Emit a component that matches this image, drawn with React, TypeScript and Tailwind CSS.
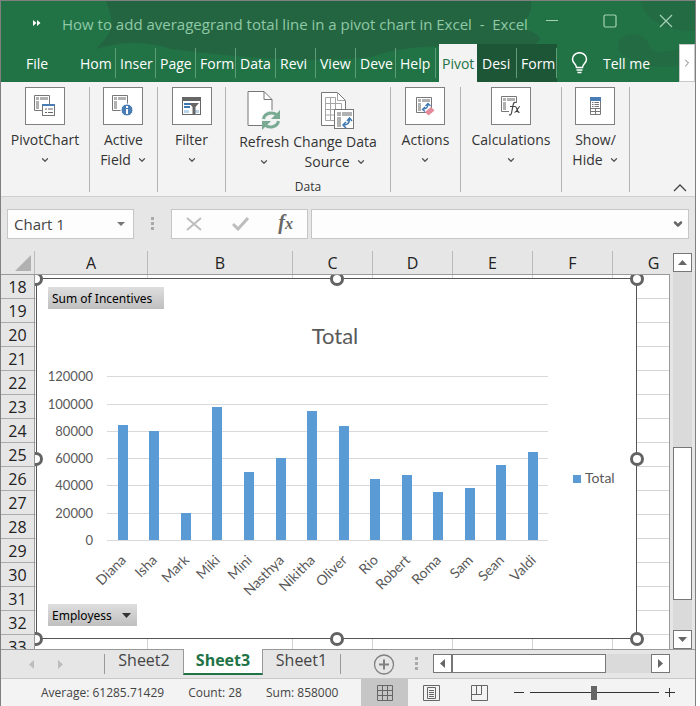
import React from 'react';
import { ChevronDown, ChevronRight, ChevronUp } from 'lucide-react';

const tabs = ['Hom', 'Inser', 'Page', 'Form', 'Data', 'Revi', 'View', 'Deve', 'Help'];

const columns = [
  { name: 'A', width: 'w-[113px]' },
  { name: 'B', width: 'w-[145px]' },
  { name: 'C', width: 'w-20' },
  { name: 'D', width: 'w-20' },
  { name: 'E', width: 'w-20' },
  { name: 'F', width: 'w-20' },
];

const rows = [18, 19, 20, 21, 22, 23, 24, 25, 26, 27, 28, 29, 30, 31, 32, 33];

const incentives = [
  { name: 'Diana', total: 85000 },
  { name: 'Isha', total: 80000 },
  { name: 'Mark', total: 20000 },
  { name: 'Miki', total: 98000 },
  { name: 'Mini', total: 50000 },
  { name: 'Nasthya', total: 60000 },
  { name: 'Nikitha', total: 95000 },
  { name: 'Oliver', total: 84000 },
  { name: 'Rio', total: 45000 },
  { name: 'Robert', total: 48000 },
  { name: 'Roma', total: 35000 },
  { name: 'Sam', total: 38000 },
  { name: 'Sean', total: 55000 },
  { name: 'Valdi', total: 65000 },
];

const axis = [0, 20000, 40000, 60000, 80000, 100000, 120000];

function TitleBar() {
  return (
    <div className="flex h-[43px] items-center">
      <button aria-label="Customize Quick Access Toolbar" className="ml-8 w-[29px]">
        <svg width="8" height="6" viewBox="0 0 8 6" fill="#fff">
          <path d="M0 0l3.5 3L0 6zM4 0l3.5 3L4 6z" />
        </svg>
      </button>
      <h1 className="flex-1 truncate whitespace-pre pt-1 text-[15px] text-[#8fc9a6]">
        How to add averagegrand total line in a pivot chart in Excel  -  Excel
      </h1>
      <div className="flex items-center pb-1 pr-[22px] text-[#a5d3b5]">
        <button aria-label="Minimize" className="w-11">
          <svg width="14" height="14" viewBox="0 0 14 14" stroke="currentColor">
            <path d="M1 6.5h12" />
          </svg>
        </button>
        <button aria-label="Maximize" className="ml-3.5 w-11">
          <svg width="14" height="14" viewBox="0 0 14 14" fill="none" stroke="currentColor" strokeWidth="1.2">
            <rect x="1" y="1" width="12" height="12" rx="1.5" />
          </svg>
        </button>
        <button aria-label="Close" className="ml-3">
          <svg width="14" height="14" viewBox="0 0 14 14" stroke="currentColor" strokeWidth="1.2">
            <path d="M1 1l12 12M13 1L1 13" />
          </svg>
        </button>
      </div>
    </div>
  );
}

function RibbonTabs() {
  return (
    <nav className="flex h-[38px] items-center whitespace-nowrap text-[14px] text-white">
      <button className="w-[75px] pl-[25px] text-left">File</button>
      {tabs.map((tab) => (
        <button key={tab} className="h-[30px] w-10 border-r border-[#5f9d79] pl-1 text-left">
          {tab}
        </button>
      ))}
      <button className="ml-[3px] h-full w-[38px] bg-[#f3f3f3] pl-[3px] text-left text-[#217346]">Pivot</button>
      <div className="flex h-full w-20 items-center bg-[#1d5637]">
        <button className="h-[30px] w-10 border-r border-[#5f9d79] pl-[5px] text-left">Desi</button>
        <button className="h-[30px] w-10 border-r border-[#5f9d79] pl-1 text-left">Form</button>
      </div>
      <button className="ml-[14px] flex flex-1 items-center gap-[15px]">
        <svg width="17" height="22" viewBox="0 0 17 22" fill="none" stroke="#fff" strokeWidth="1.5">
          <path d="M5.5 15.5c0-3.5-4-4-4-8.300a7 6.500 0 0 1 14 0c0 4.300-4 4.800-4 8.300z" />
          <path d="M5.500 18h6M6.500 20.500h4" />
        </svg>
        Tell me
      </button>
      <button aria-label="Scroll tabs" className="flex h-full w-4 items-center justify-center border border-[#c8c8c8] bg-white text-[#777]">
        <ChevronRight size={12} className="shrink-0" />
      </button>
    </nav>
  );
}

function Sheet() {
  return (
    <>
      <path d="M.5.5h15v15H.5z" fill="#fff" stroke="#777" />
      <path d="M2 2h3v3H2zM6 2h8v3H6zM2 6h3v8H2z" fill="#b1b1b1" />
    </>
  );
}

function Caret() {
  return <ChevronDown size={10} strokeWidth={3} className="inline-block text-[#555]" />;
}

function Group({ lines, width, children }) {
  return (
    <div className={`flex shrink-0 flex-col items-center border-r border-[#b4b4b4] ${width}`}>
      <button className="flex flex-col items-center text-[14px] leading-5 text-[#333]">
        <span className="mb-[5px] flex h-[38px] w-10 items-center justify-center border border-[#808080] bg-white">
          {children}
        </span>
        <span>{lines[0]}</span>
        <span className="flex h-5 items-center gap-1.5">
          {lines[1]}
          <Caret />
        </span>
      </button>
    </div>
  );
}

function Ribbon() {
  return (
    <div className="flex h-[115px] border-b border-[#cfcfcf] bg-[#f3f3f3] pb-1 pt-[5px]">
      <Group lines={['PivotChart']} width="w-[89px]">
        <svg width="22" height="22" viewBox="0 0 22 22">
          <Sheet />
          <rect x="8.500" y="9.500" width="12" height="11" fill="#fff" stroke="#777" />
          <path d="M8 9h13v2H8z" fill="#4a7db3" />
          <path d="M11 14h2M14 14h5M11 17.500h2M14 17.500h5" stroke="#666" />
        </svg>
      </Group>
      <Group lines={['Active', 'Field']} width="w-[68px]">
        <svg width="22" height="22" viewBox="0 0 22 22">
          <Sheet />
          <circle cx="15" cy="15" r="6" fill="#4a7db3" stroke="#fff" />
          <path d="M15 11v2M15 14v5" stroke="#fff" strokeWidth="2" />
        </svg>
      </Group>
      <Group lines={['Filter']} width="w-[68px]">
        <svg width="19" height="18" viewBox="0 0 19 18">
          <rect x=".5" y=".5" width="18" height="17" fill="#fff" stroke="#666" />
          <path d="M0 0h19v4H0z" fill="#666" />
          <path d="M2 6h9v2H2zM2 9h6v2H2z" fill="#3e76b0" />
          <path d="M2 13h5v3H2zM13 13h4v3h-4z" fill="#b9d3ea" />
          <path d="M7 6h10l-3.500 4v7h-3v-7z" fill="#666" />
        </svg>
      </Group>
      <div className="flex w-[165px] shrink-0 flex-col border-r border-[#b4b4b4] text-[#333]">
        <div className="flex flex-1 justify-center gap-1 pt-1 text-[14px] leading-5">
          <button className="flex flex-col items-center">
            <svg width="40" height="40" viewBox="-3 0 40 40" className="mb-px" fill="none">
              <path d="M1 .5h16l8 8v26H1z" fill="#fff" stroke="#777" />
              <path d="M17 .5v8h8" stroke="#777" />
              <circle cx="24" cy="29" r="10" fill="#f3f3f3" />
              <path d="M16.500 28a8 7 0 0 1 14-3.500M31.500 30a8 7 0 0 1-14 3.500" stroke="#79ab93" strokeWidth="3" />
              <path d="M33 19v9h-9zM15 39v-9h9z" fill="#79ab93" />
            </svg>
            Refresh
            <span className="flex h-5 items-center">
              <Caret />
            </span>
          </button>
          <button className="flex flex-col items-center">
            <svg width="40" height="40" viewBox="-5 0 40 40" className="mb-px" fill="none">
              <path d="M1.500 1.500h16l8 8v25h-24z" fill="#fff" stroke="#777" />
              <path d="M17.500 1.500v8h8M5.500 6.500h10v23h-10zM10.500 6.500v23M5.500 12.500h16v17h-16M5.500 18.500h16M5.500 24h16M15.500 12.500v17" stroke="#a5a5a5" />
              <rect x="14.500" y="18.500" width="19" height="19" fill="#fff" stroke="#777" />
              <path d="M17 21h4v4h-4zM22 21h10v4H22zM17 26h4v10h-4z" fill="#b1b1b1" />
              <path d="M23.500 34c4 0 6-2 6-6M27 30l2.500-3 2.500 3M26 31l-3 3 3 3" stroke="#3e76b0" strokeWidth="1.500" />
            </svg>
            Change Data
            <span className="flex h-5 items-center gap-1.5">
              Source
              <Caret />
            </span>
          </button>
        </div>
        <span className="text-center text-xs leading-[10px]">Data</span>
      </div>
      <Group lines={['Actions']} width="w-[70px]">
        <svg width="19" height="19" viewBox="0 0 19 19" fill="none">
          <Sheet />
          <path d="M7 12c3.500 0 5-1.500 5-5M9.500 9L12 6.500 14.500 9M9 10l-2.500 2.500L9 14.500" stroke="#3e76b0" strokeWidth="1.300" />
          <path d="M9 15l6-5 3.500 3.500-6 5z" fill="#e58a9b" />
        </svg>
      </Group>
      <Group lines={['Calculations']} width="w-[101px]">
        <svg width="20" height="20" viewBox="0 0 20 20">
          <Sheet />
          <path d="M8 7h12v13H8z" fill="#fff" />
          <path d="M15 6.500c-2-.8-2.600 1-3 3L10.500 17c-.4 1.800-1.200 2.200-2.500 1.700M9 10.500h5M14 10.500c2.500 0 1.500 6 4.500 6M19 10.500c-2 0-3 6-5.500 6" fill="none" stroke="#444" strokeWidth="1.200" />
        </svg>
      </Group>
      <Group lines={['Show/', 'Hide']} width="w-[68px]">
        <svg width="11" height="18" viewBox="0 0 11 18" fill="none" stroke="#777">
          <path d="M.5.500h10v17H.5z" fill="#fff" />
          <path d="M0 0h11v4H0z" fill="#4a7db3" stroke="none" />
          <path d="M2 5.500h1.500M4.500 5.500H9M2 7.500h1.500M4.500 7.500H9M2 9.500h1.500M4.500 9.500H9M0 11.500h11M0 14.500h11M5.500 11.500v6" />
        </svg>
      </Group>
      <div className="flex flex-1 items-end justify-end pr-2">
        <button aria-label="Collapse the Ribbon" className="text-[#444]">
          <svg width="14" height="8" viewBox="0 0 14 8" fill="none" stroke="currentColor" strokeWidth="1.300">
            <path d="M1 7l6-6 6 6" />
          </svg>
        </button>
      </div>
    </div>
  );
}

function Dots() {
  return (
    <svg width="3" height="14" viewBox="0 0 3 14" fill="#a9a9a9">
      <path d="M0 0h3v3H0zM0 5h3v3H0zM0 10h3v3H0z" />
    </svg>
  );
}

function FormulaBar() {
  return (
    <div className="flex h-[42px] items-end pl-1.5 pr-[6px]">
      <div className="flex h-[30px] w-[127px] items-center border border-[#c6c6c6] bg-[#fdfdfd] pl-1.5 pr-2">
        <input aria-label="Name Box" defaultValue="Chart 1" className="w-full min-w-0 bg-transparent text-[15px] text-[#444] outline-none" />
        <button aria-label="Open names">
          <svg width="8" height="4" viewBox="0 0 8 4" fill="#777">
            <path d="M0 0h8L4 4z" />
          </svg>
        </button>
      </div>
      <div className="flex h-[30px] w-[37px] items-center justify-center">
        <Dots />
      </div>
      <div className="flex h-[30px] w-[137px] items-center justify-between border border-[#c6c6c6] bg-[#fdfdfd] px-[14px]">
        <button aria-label="Cancel">
          <svg width="16" height="14" viewBox="0 0 16 14" stroke="#bdbdbd" strokeWidth="2">
            <path d="M1 1l14 12M15 1L1 13" />
          </svg>
        </button>
        <button aria-label="Enter">
          <svg width="17" height="14" viewBox="0 0 17 14" fill="none" stroke="#bdbdbd" strokeWidth="3">
            <path d="M1 7l5 5L16 1" />
          </svg>
        </button>
        <button aria-label="Insert Function" className="font-['Liberation_Serif',serif] text-xl font-bold italic leading-5 text-[#666]">
          f<span className="text-base">x</span>
        </button>
      </div>
      <div className="ml-[3px] flex h-[30px] flex-1 items-center border border-[#c6c6c6] bg-[#fdfdfd] pr-1">
        <input aria-label="Formula Bar" className="h-full w-full min-w-0 bg-transparent px-1 text-[15px] outline-none" />
        <button aria-label="Expand Formula Bar" className="text-[#666]">
          <ChevronDown size={12} strokeWidth={5} />
        </button>
      </div>
    </div>
  );
}

function PivotChart() {
  return (
    <div className="absolute left-px top-[3px] h-[361px] w-[601px] border border-[#555] bg-white">
      <svg width="599" height="359" viewBox="37 279 599 359" className="font-[Lato,sans-serif] text-[13px]" fill="#595959">
        <text x="335" y="344" textAnchor="middle" className="text-[22px]">
          Total
        </text>
        {axis.map((value, i) => (
          <g key={value}>
            <path d={`M107 ${Math.round(540 - i * 27.3) + 0.5}h441`} stroke="#d9d9d9" />
            <text x="93" y={Math.round(545 - i * 27.3)} textAnchor="end">
              {value}
            </text>
          </g>
        ))}
        {incentives.map((person, i) => {
          const x = Math.round(122.8 + i * 31.55);
          const height = Math.round((person.total / 120000) * 163);
          return (
            <g key={person.name}>
              <rect x={x - 5} y={540 - height} width="10" height={height} fill="#5b9bd5" />
              <text x={x + 4} y="561" textAnchor="end" transform={`rotate(-45 ${x + 4} 561)`} className="text-[14px]">
                {person.name}
              </text>
            </g>
          );
        })}
        <rect x="573" y="475" width="8" height="8" fill="#5b9bd5" />
        <text x="585" y="483" className="text-[14px]">
          Total
        </text>
      </svg>
      <button className="absolute left-[11px] top-2 h-[22px] w-[116px] bg-linear-to-b from-[#dedede] to-[#bfbfbf] px-1 pt-px text-left font-['Noto_Sans',sans-serif] text-xs text-black">
        Sum of Incentives
      </button>
      <button className="absolute bottom-3 left-[11px] flex h-[22px] w-[89px] items-center justify-between bg-linear-to-b from-[#dedede] to-[#bfbfbf] pl-1 pr-1.5 pt-px font-['Noto_Sans',sans-serif] text-xs text-black">
        Employess
        <svg width="9" height="5" viewBox="0 0 9 5" fill="#333">
          <path d="M0 0h9L4.500 5z" />
        </svg>
      </button>
      <Handle place="-left-2 -top-[7px]" />
      <Handle place="left-[293px] -top-[7px]" />
      <Handle place="-right-2 -top-[7px]" />
      <Handle place="-left-2 top-[173px]" />
      <Handle place="-right-2 top-[173px]" />
      <Handle place="-left-2 -bottom-2" />
      <Handle place="left-[293px] -bottom-2" />
      <Handle place="-right-2 -bottom-2" />
    </div>
  );
}

function Handle({ place }) {
  return <span className={`absolute size-[14px] rounded-full border-[3px] border-[#636363] bg-white ${place}`} />;
}

function Worksheet() {
  return (
    <div className="min-w-0 flex-1">
      <div className="flex h-6 border-b border-[#999] text-center text-base leading-6 text-[#222]">
        <div className="flex w-[34px] items-end justify-end border-r border-[#bbb] pb-[3px] pr-[3px]">
          <svg width="16" height="16" viewBox="0 0 16 16" fill="#b1b1b1">
            <path d="M16 0v16H0z" />
          </svg>
        </div>
        {columns.map((col) => (
          <div key={col.name} className={`shrink-0 border-r border-[#bbb] ${col.width}`}>
            {col.name}
          </div>
        ))}
        <div className="flex-1 pl-6">G</div>
      </div>
      <div className="flex h-[374px] overflow-hidden border-r border-[#999]">
        <div className="w-[34px] shrink-0 border-r border-[#999] text-center text-base text-[#222]">
          {rows.map((row) => (
            <div key={row} className="h-6 border-b border-[#ababab] leading-6">
              {row}
            </div>
          ))}
        </div>
        <div className="relative h-[374px] flex-1 overflow-hidden bg-white">
          {rows.map((row) => (
            <div key={row} className="flex h-6 border-b border-[#d4d4d4]">
              {columns.map((col) => (
                <div key={col.name} className={`shrink-0 border-r border-[#d4d4d4] ${col.width}`} />
              ))}
            </div>
          ))}
          <PivotChart />
        </div>
      </div>
    </div>
  );
}

function ScrollButton({ label, d }) {
  return (
    <button aria-label={label} className="flex h-[19px] w-[19px] shrink-0 items-center justify-center border border-[#777] bg-white">
      <svg width="9" height="9" viewBox="0 0 9 9" fill="#666">
        <path d={d} />
      </svg>
    </button>
  );
}

function SheetBar() {
  return (
    <div className="flex h-[29px] items-start border-t border-[#999] text-base text-[#444]">
      <div className="flex h-7 w-[103px] items-center gap-6 pl-7">
        <svg width="5" height="9" viewBox="0 0 5 9" fill="#bdbdbd">
          <path d="M5 0v9L0 4.500z" />
        </svg>
        <svg width="5" height="9" viewBox="0 0 5 9" fill="#bdbdbd">
          <path d="M0 0v9l5-4.500z" />
        </svg>
      </div>
      <button className="mt-1 h-5 w-[79px] border-l border-[#999] pb-2 leading-3">Sheet2</button>
      <button className="-mt-px h-[26px] w-20 border-x border-b-2 border-x-[#999] border-b-[#217346] bg-white pb-0.5 font-bold leading-5 text-[#217346]">
        Sheet3
      </button>
      <button className="mt-1 h-5 w-[78px] border-r border-[#999] pb-2 leading-3">Sheet1</button>
      <button aria-label="New sheet" className="ml-8 mt-1">
        <svg width="22" height="21" viewBox="0 0 22 21" fill="none" stroke="#808080">
          <circle cx="11" cy="10.500" r="9.500" strokeWidth="1.300" />
          <path d="M11 5.500v10M6 10.500h10" strokeWidth="2" />
        </svg>
      </button>
      <div className="ml-5 mt-[7px]">
        <Dots />
      </div>
      <div className="ml-[15px] mr-[25px] mt-1 flex flex-1 bg-[#dadada]">
        <ScrollButton label="Scroll left" d="M7 0v9L2 4.500z" />
        <div className="h-[19px] w-[154px] border border-[#777] bg-white" />
        <div className="flex-1" />
        <ScrollButton label="Scroll right" d="M2 0v9l5-4.500z" />
      </div>
    </div>
  );
}

function StatusBar() {
  return (
    <div className="flex h-7 items-center border-t border-[#c8c8c8] bg-[#f3f3f3] text-xs text-[#444]">
      <div className="flex w-[360px] shrink-0 gap-6 whitespace-nowrap pl-10">
        <span>Average: 61285.71429</span>
        <span>Count: 28</span>
        <span>Sum: 858000</span>
      </div>
      <button aria-label="Normal" className="flex h-full w-[50px] items-center justify-center bg-[#c6c6c6]">
        <svg width="16" height="16" viewBox="0 0 16 16" fill="none" stroke="#666">
          <path d="M.5.500h15v15H.5zM5.500 0v16M10.500 0v16M0 5.500h16M0 10.500h16" />
        </svg>
      </button>
      <button aria-label="Page Layout" className="flex w-[50px] justify-center">
        <svg width="17" height="16" viewBox="0 0 17 16" fill="none" stroke="#666">
          <path d="M.5.500h16v15H.5zM4.500 2.500h8v11h-8zM6 5.500h5M6 7.500h5M6 9.500h5M6 11.500h5" />
        </svg>
      </button>
      <button aria-label="Page Break Preview" className="flex w-[50px] justify-center">
        <svg width="17" height="16" viewBox="0 0 17 16" fill="none" stroke="#666">
          <path d="M.5.500h16v15H.5zM5.500.500v9M10.500.500v9H.5" />
        </svg>
      </button>
      <div className="flex flex-1 items-center pl-[7px] pr-5">
        <button aria-label="Zoom out" className="pl-1">
          <svg width="10" height="10" viewBox="0 0 10 10" stroke="#333">
            <path d="M0 4.500h10" />
          </svg>
        </button>
        <input
          type="range"
          aria-label="Zoom"
          defaultValue="50"
          className="mx-1.5 h-[14px] min-w-0 flex-1 appearance-none bg-[linear-gradient(#333,#333)] bg-[length:100%_1px] bg-center bg-no-repeat [&::-webkit-slider-thumb]:h-[14px] [&::-webkit-slider-thumb]:w-1.5 [&::-webkit-slider-thumb]:appearance-none [&::-webkit-slider-thumb]:bg-[#666]"
        />
        <button aria-label="Zoom in">
          <svg width="10" height="10" viewBox="0 0 10 10" stroke="#333">
            <path d="M0 4.500h10M4.500 0v9" />
          </svg>
        </button>
      </div>
    </div>
  );
}

export default function App() {
  return (
    <div className="mr-1 border border-[#808080] bg-[#e6e6e6] font-['Open_Sans','Noto_Sans',sans-serif]">
      <header className="relative overflow-hidden bg-[#217346]">
        <svg className="absolute inset-0 h-full w-full" viewBox="0 0 694 81" preserveAspectRatio="none" fill="#246541">
          <path d="M105 0h425c2 14-6 20-14 26 14 4 26 8 22 14s-20 12-38 16c-40-14-90-14-130 0-70 8-150-2-200-8-30-10-54-6-75 0 12-14 22-18 10-48z" />
          <path d="M618 40c8-10 26-8 30 4s16 6 46 2v16c-30 6-44 4-54 0s-28-8-22-22z" opacity=".6" />
          <path d="M640 0h54v30c-20 0-50-6-54-30z" opacity=".6" />
        </svg>
        <div className="relative">
          <TitleBar />
          <RibbonTabs />
        </div>
      </header>
      <Ribbon />
      <FormulaBar />
      <div className="mt-3 flex">
        <Worksheet />
        <div className="flex w-[25px] shrink-0 flex-col px-[3px] pt-0.5">
          <ScrollButton label="Scroll up" d="M0 7h9L4.500 2z" />
          <div className="flex-1 bg-[#dadada] pt-[175px]">
            <div className="h-[153px] border border-[#777] bg-white" />
          </div>
          <ScrollButton label="Scroll down" d="M0 2h9L4.500 7z" />
        </div>
      </div>
      <SheetBar />
      <StatusBar />
    </div>
  );
}
